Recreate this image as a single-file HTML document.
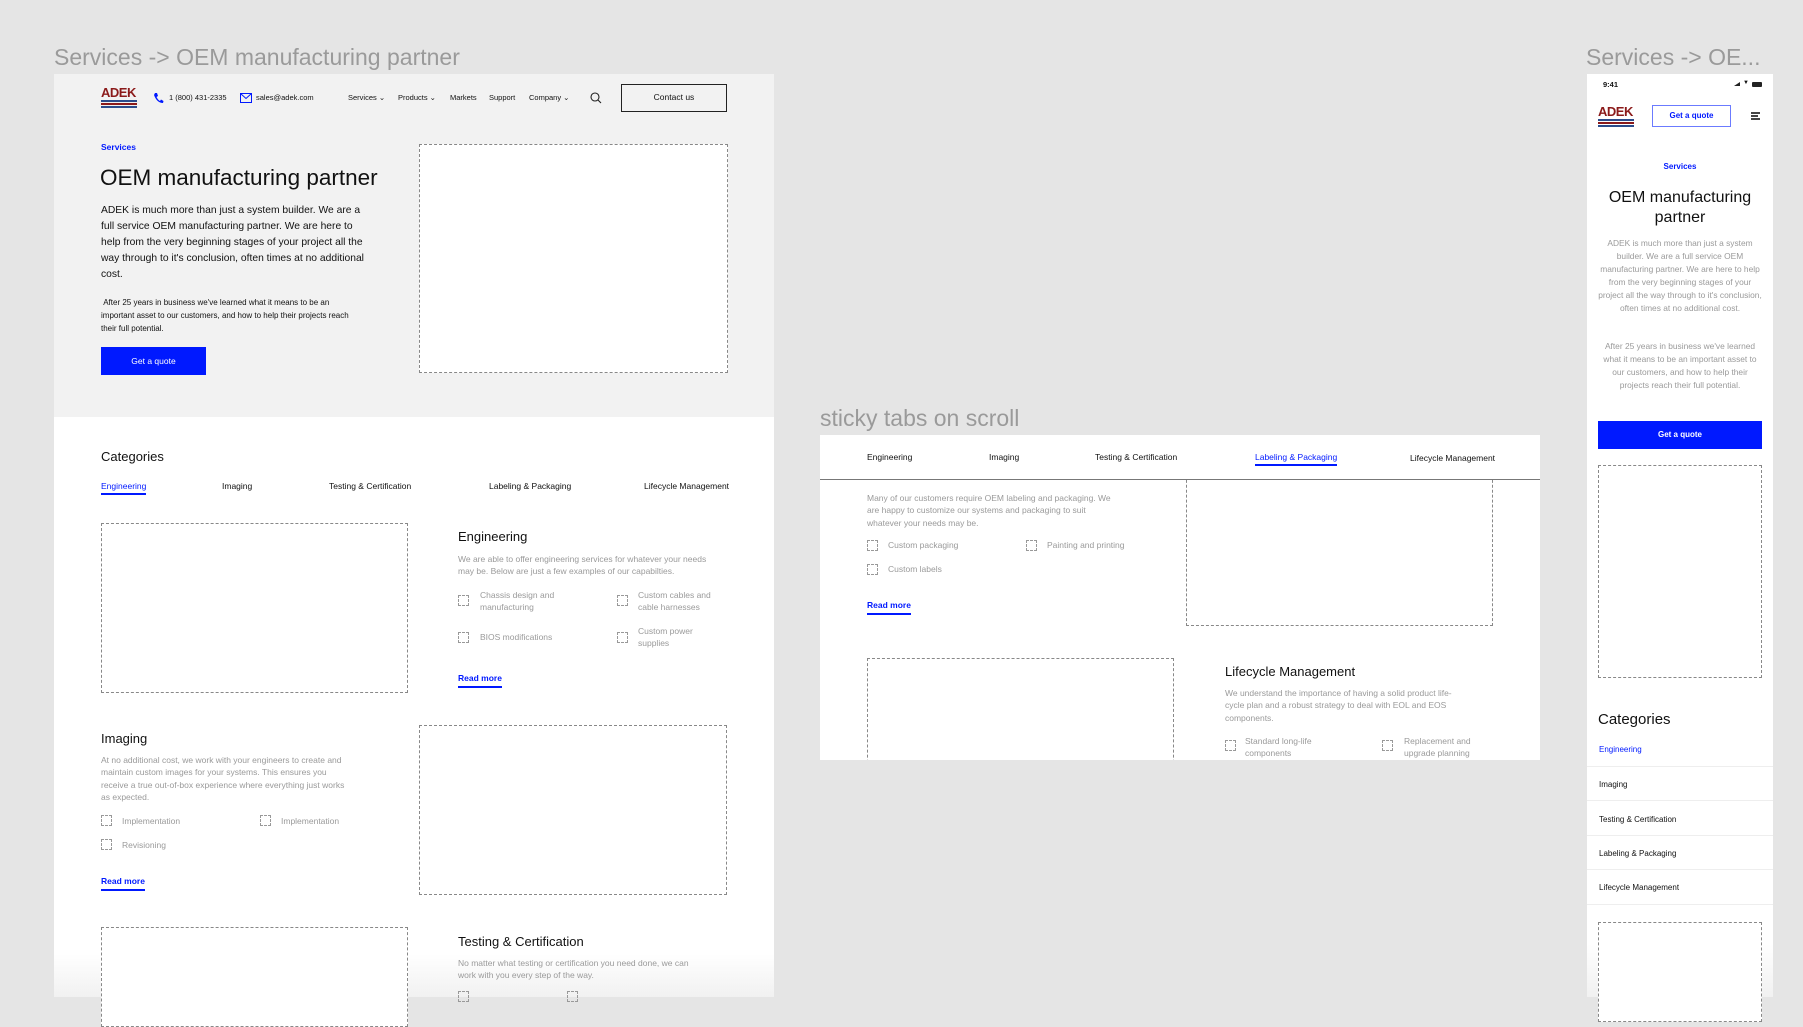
<!DOCTYPE html>
<html><head><meta charset="utf-8"><style>
*{margin:0;padding:0;box-sizing:border-box}
body{width:1803px;height:997px;background:#e5e5e5;font-family:"Liberation Sans",sans-serif;position:relative;overflow:hidden;color:#111}
.a{position:absolute;white-space:nowrap}
.lbl{font-size:23px;color:#9a9a9a}
.ph{position:absolute;border:1.3px dashed #888;background:#fff}
.g{color:#9a9a9a}
.cb{position:absolute;width:11px;height:11px;border:1px dashed #999}
.rm{position:absolute;color:#0019ff;font-size:8.5px;font-weight:bold;border-bottom:2px solid #0019ff;padding-bottom:3px}
.tab{position:absolute;font-size:8.5px;color:#111}
.p9{font-size:8.5px;line-height:12.3px}
</style></head><body>

<!-- Desktop -->
<div class="a lbl" style="left:54px;top:44px">Services -&gt; OEM manufacturing partner</div>
<div class="a" style="left:54px;top:74px;width:720px;height:923px;background:linear-gradient(#fff 0,#fff 880px,#f1f1f1 923px)"></div>
<div class="a" style="left:54px;top:74px;width:720px;height:343px;background:#f2f2f2"></div>

<!-- logo -->
<div class="a" style="left:101px;top:86px;width:36px;height:22px">
 <div style="font-weight:bold;color:#8b1a1a;font-size:13px;letter-spacing:-0.5px;line-height:13px">ADEK</div>
 <div style="height:2px;background:#2b4c8c;margin-top:1px"></div>
 <div style="height:2px;background:#8b1a1a;margin-top:1px"></div>
 <div style="height:2px;background:#2b4c8c;margin-top:1px"></div>
</div>
<svg class="a" style="left:153px;top:92px" width="11" height="12" viewBox="0 0 11 12"><path d="M2 1 L4 1 L5 4 L3.5 5 Q5 8 7 9 L8 7.5 L10.5 9 L10 11 Q4 11 1 3 Z" fill="#0019ff"/></svg>
<div class="a" style="left:169px;top:93px;font-size:7.5px">1 (800) 431-2335</div>
<svg class="a" style="left:240px;top:93px" width="12" height="10" viewBox="0 0 12 10"><rect x="0.5" y="0.5" width="11" height="9" fill="none" stroke="#0019ff"/><path d="M0.5 0.5 L6 5.5 L11.5 0.5" fill="none" stroke="#0019ff"/></svg>
<div class="a" style="left:256px;top:93px;font-size:7.5px">sales@adek.com</div>
<div class="a" style="left:348px;top:93px;font-size:7.5px">Services &#8964;</div>
<div class="a" style="left:398px;top:93px;font-size:7.5px">Products &#8964;</div>
<div class="a" style="left:450px;top:93px;font-size:7.5px">Markets</div>
<div class="a" style="left:489px;top:93px;font-size:7.5px">Support</div>
<div class="a" style="left:529px;top:93px;font-size:7.5px">Company &#8964;</div>
<svg class="a" style="left:590px;top:92px" width="12" height="12" viewBox="0 0 12 12"><circle cx="5" cy="5" r="4" fill="none" stroke="#222" stroke-width="1.1"/><path d="M8 8 L11 11" stroke="#222" stroke-width="1.1"/></svg>
<div class="a" style="left:621px;top:84px;width:106px;height:28px;border:1.5px solid #222;font-size:8.5px;text-align:center;line-height:25px">Contact us</div>

<div class="a" style="left:101px;top:142px;font-size:8.5px;font-weight:bold;color:#0019ff">Services</div>
<div class="a" style="left:100px;top:165px;font-size:22.5px">OEM manufacturing partner</div>
<div class="a" style="left:101px;top:203px;font-size:10.3px;line-height:16.1px;white-space:normal;width:265px">ADEK is much more than just a system builder. We are a full service OEM manufacturing partner. We are here to help from the very beginning stages of your project all the way through to it's conclusion, often times at no additional cost.</div>
<div class="a" style="left:101px;top:296px;font-size:8px;line-height:13.2px;white-space:normal;width:262px">&nbsp;After 25 years in business we've learned what it means to be an important asset to our customers, and how to help their projects reach their full potential.</div>
<div class="a" style="left:101px;top:347px;width:105px;height:28px;background:#0019ff;color:#fff;font-size:8.5px;text-align:center;line-height:28px">Get a quote</div>
<div class="ph" style="left:419px;top:144px;width:309px;height:229px"></div>

<div class="a" style="left:101px;top:449px;font-size:13px">Categories</div>
<div class="tab" style="left:101px;top:481px;color:#0019ff;border-bottom:2px solid #0019ff;padding-bottom:2px">Engineering</div>
<div class="tab" style="left:222px;top:481px">Imaging</div>
<div class="tab" style="left:329px;top:481px">Testing &amp; Certification</div>
<div class="tab" style="left:489px;top:481px">Labeling &amp; Packaging</div>
<div class="tab" style="left:644px;top:481px">Lifecycle Management</div>

<div class="ph" style="left:101px;top:523px;width:307px;height:170px"></div>
<div class="a" style="left:458px;top:529px;font-size:13px">Engineering</div>
<div class="a g p9" style="left:458px;top:553px">We are able to offer engineering services for whatever your needs<br>may be. Below are just a few examples of our capabilties.</div>
<div class="cb" style="left:458px;top:595px"></div><div class="a g p9" style="left:480px;top:589px">Chassis design and<br>manufacturing</div>
<div class="cb" style="left:617px;top:595px"></div><div class="a g p9" style="left:638px;top:589px">Custom cables and<br>cable harnesses</div>
<div class="cb" style="left:458px;top:632px"></div><div class="a g p9" style="left:480px;top:631px">BIOS modifications</div>
<div class="cb" style="left:617px;top:632px"></div><div class="a g p9" style="left:638px;top:625px">Custom power<br>supplies</div>
<div class="rm" style="left:458px;top:673px">Read more</div>

<div class="a" style="left:101px;top:731px;font-size:13px">Imaging</div>
<div class="a g p9" style="left:101px;top:754px">At no additional cost, we work with your engineers to create and<br>maintain custom images for your systems. This ensures you<br>receive a true out-of-box experience where everything just works<br>as expected.</div>
<div class="cb" style="left:101px;top:815px"></div><div class="a g p9" style="left:122px;top:815px">Implementation</div>
<div class="cb" style="left:260px;top:815px"></div><div class="a g p9" style="left:281px;top:815px">Implementation</div>
<div class="cb" style="left:101px;top:839px"></div><div class="a g p9" style="left:122px;top:839px">Revisioning</div>
<div class="rm" style="left:101px;top:876px">Read more</div>
<div class="ph" style="left:419px;top:725px;width:308px;height:170px"></div>

<div class="ph" style="left:101px;top:927px;width:307px;height:100px"></div>
<div class="a" style="left:458px;top:934px;font-size:13px">Testing &amp; Certification</div>
<div class="a g p9" style="left:458px;top:957px">No matter what testing or certification you need done, we can<br>work with you every step of the way.</div>
<div class="cb" style="left:458px;top:991px"></div><div class="cb" style="left:567px;top:991px"></div>

<!-- sticky -->
<div class="a lbl" style="left:820px;top:405px">sticky tabs on scroll</div>
<div class="a" style="left:820px;top:435px;width:720px;height:325px;background:#fff;overflow:hidden">
 <div class="a g p9" style="left:47px;top:57px">Many of our customers require OEM labeling and packaging. We<br>are happy to customize our systems and packaging to suit<br>whatever your needs may be.</div>
 <div class="cb" style="left:47px;top:105px"></div><div class="a g p9" style="left:68px;top:104px">Custom packaging</div>
 <div class="cb" style="left:206px;top:105px"></div><div class="a g p9" style="left:227px;top:104px">Painting and printing</div>
 <div class="cb" style="left:47px;top:129px"></div><div class="a g p9" style="left:68px;top:128px">Custom labels</div>
 <div class="rm" style="left:47px;top:165px">Read more</div>
 <div class="ph" style="left:366px;top:30px;width:307px;height:161px"></div>
 <div class="ph" style="left:47px;top:223px;width:307px;height:120px"></div>
 <div class="a" style="left:405px;top:229px;font-size:13px">Lifecycle Management</div>
 <div class="a g p9" style="left:405px;top:252px">We understand the importance of having a solid product life-<br>cycle plan and a robust strategy to deal with EOL and EOS<br>components.</div>
 <div class="cb" style="left:405px;top:305px"></div><div class="a g p9" style="left:425px;top:300px">Standard long-life<br>components</div>
 <div class="cb" style="left:562px;top:305px"></div><div class="a g p9" style="left:584px;top:300px">Replacement and<br>upgrade planning</div>
 <div class="a" style="left:0;top:0;width:720px;height:45px;background:#fff;border-bottom:1px solid #777"></div>
 <div class="tab" style="left:47px;top:17px">Engineering</div>
 <div class="tab" style="left:169px;top:17px">Imaging</div>
 <div class="tab" style="left:275px;top:17px">Testing &amp; Certification</div>
 <div class="tab" style="left:435px;top:17px;color:#0019ff;border-bottom:2px solid #0019ff;padding-bottom:2px">Labeling &amp; Packaging</div>
 <div class="tab" style="left:590px;top:18px">Lifecycle Management</div>
</div>

<!-- mobile -->
<div class="a lbl" style="left:1586px;top:44px">Services -&gt; OE...</div>
<div class="a" style="left:1587px;top:74px;width:186px;height:923px;background:linear-gradient(#fff 0,#fff 870px,#f1f1f1 923px)"></div>
<div class="a" style="left:1603px;top:80px;font-size:7.5px;font-weight:bold">9:41</div>
<div class="a" style="left:1734px;top:81px;width:6px;height:5px;border-bottom:4px solid #222;border-left:6px solid transparent"></div>
<div class="a" style="left:1743px;top:80px;font-size:6px">&#9660;</div>
<div class="a" style="left:1752px;top:82px;width:10px;height:5px;background:#222;border-radius:1px"></div>
<div class="a" style="left:1598px;top:105px;width:36px;height:22px">
 <div style="font-weight:bold;color:#8b1a1a;font-size:13px;letter-spacing:-0.5px;line-height:13px">ADEK</div>
 <div style="height:2px;background:#2b4c8c;margin-top:1px"></div>
 <div style="height:2px;background:#8b1a1a;margin-top:1px"></div>
 <div style="height:2px;background:#2b4c8c;margin-top:1px"></div>
</div>
<div class="a" style="left:1652px;top:105px;width:79px;height:22px;border:1px solid #6b7bff;color:#0019ff;font-size:8px;font-weight:bold;text-align:center;line-height:20px">Get a quote</div>
<div class="a" style="left:1751px;top:112px;width:9px;height:2px;background:#444"></div>
<div class="a" style="left:1751px;top:115px;width:7px;height:2px;background:#444"></div>
<div class="a" style="left:1751px;top:118px;width:9px;height:2px;background:#444"></div>
<div class="a" style="left:1587px;top:162px;width:186px;text-align:center;font-size:8px;font-weight:bold;color:#0019ff">Services</div>
<div class="a" style="left:1587px;top:188px;width:186px;text-align:center;font-size:16px;line-height:20px;white-space:normal">OEM manufacturing<br>partner</div>
<div class="a g" style="left:1598px;top:237px;width:164px;text-align:center;font-size:8.4px;line-height:13px;white-space:normal">ADEK is much more than just a system builder. We are a full service OEM manufacturing partner. We are here to help from the very beginning stages of your project all the way through to it's conclusion, often times at no additional cost.</div>
<div class="a g" style="left:1600px;top:340px;width:160px;text-align:center;font-size:8.4px;line-height:13px;white-space:normal">After 25 years in business we've learned what it means to be an important asset to our customers, and how to help their projects reach their full potential.</div>
<div class="a" style="left:1598px;top:421px;width:164px;height:28px;background:#0019ff;color:#fff;font-size:8px;font-weight:bold;text-align:center;line-height:28px">Get a quote</div>
<div class="ph" style="left:1598px;top:465px;width:164px;height:213px"></div>
<div class="a" style="left:1598px;top:711px;font-size:15px">Categories</div>
<div class="a" style="left:1599px;top:745px;font-size:8px;color:#0019ff">Engineering</div>
<div class="a" style="left:1587px;top:766px;width:186px;border-top:1px solid #eee"></div>
<div class="a" style="left:1599px;top:780px;font-size:8px">Imaging</div>
<div class="a" style="left:1587px;top:800px;width:186px;border-top:1px solid #eee"></div>
<div class="a" style="left:1599px;top:815px;font-size:8px">Testing &amp; Certification</div>
<div class="a" style="left:1587px;top:835px;width:186px;border-top:1px solid #eee"></div>
<div class="a" style="left:1599px;top:849px;font-size:8px">Labeling &amp; Packaging</div>
<div class="a" style="left:1587px;top:869px;width:186px;border-top:1px solid #eee"></div>
<div class="a" style="left:1599px;top:883px;font-size:8px">Lifecycle Management</div>
<div class="a" style="left:1587px;top:904px;width:186px;border-top:1px solid #eee"></div>
<div class="ph" style="left:1598px;top:922px;width:164px;height:100px"></div>
</body></html>
